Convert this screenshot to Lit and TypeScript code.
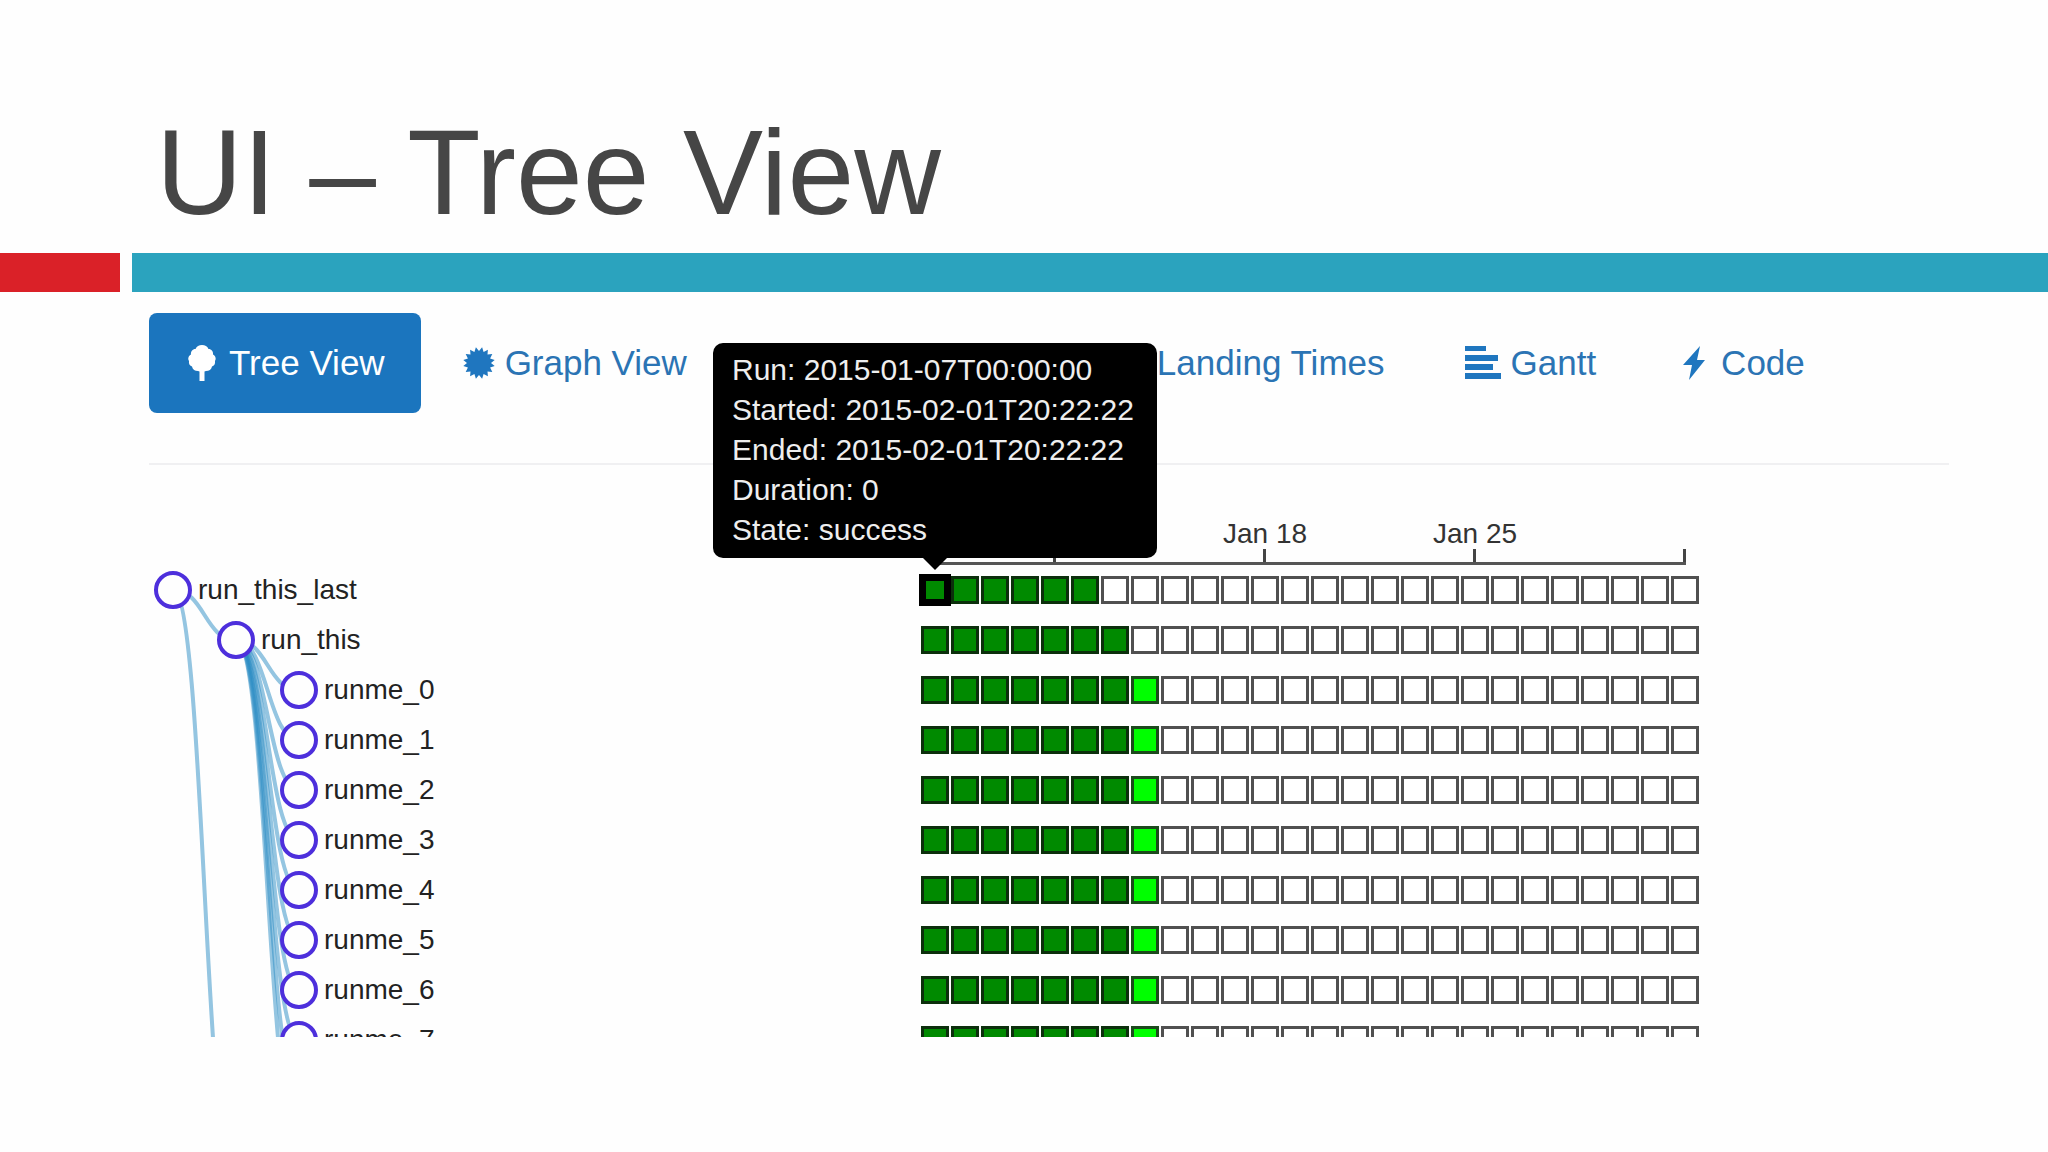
import { LitElement, html, svg, css } from "lit";
import { customElement, property } from "lit/decorators.js";
import { classMap } from "lit/directives/class-map.js";

type RunState = "success" | "running" | "none";

interface Task {
  name: string;
  depth: number;
  row: number;
  success: number;
  running: number;
}

const RUN_COUNT = 26;
const ROW_HEIGHT = 50;
const INDENT = 63;

const TASKS: Task[] = [
  { name: "run_this_last", depth: 0, row: 0, success: 6, running: 0 },
  { name: "run_this", depth: 1, row: 1, success: 7, running: 0 },
  ...Array.from({ length: 8 }, (_, i) => ({
    name: `runme_${i}`,
    depth: 2,
    row: i + 2,
    success: 7,
    running: 1,
  })),
];

/* Edges also reach rows that lie below the visible part of the tree. */
const EDGES = [
  { from: [0, 0], to: [1, 1] },
  { from: [0, 0], to: [1, 12] },
  ...Array.from({ length: 10 }, (_, i) => ({ from: [1, 1], to: [2, i + 2] })),
];

const ICONS = {
  tree: svg`<path d="M15 0c3 0 5.500 1.500 6.500 4 3 0 5 2.500 4.500 5.500 2.500 1.500 3.500 4 2 6.500.5 3-1 5-3 5.500-.5 3-3 4.500-6 4.500l-1.500.5V36h-5V26.500L11 26c-3 0-5.500-1.500-6-4.500-2-.5-3.500-2.500-3-5.500-1.500-2.500-.5-5 2-6.500C3.500 6.500 5.500 4 8.500 4c1-2.500 3.500-4 6.500-4z"/>`,
  burst: svg`<polygon points=${Array.from({ length: 32 }, (_, i) => {
    const r = i % 2 ? 12 : 16;
    const a = (i * Math.PI) / 16 + Math.PI / 16;
    return `${(16 + r * Math.sin(a)).toFixed(1)},${(16 - r * Math.cos(a)).toFixed(1)}`;
  }).join(" ")} />`,
  plane: svg`<path d="M16 0l4 4v9l12 10v4l-12-5v7l4 3v2l-8-2-8 2v-2l4-3v-7L0 27v-4l12-10V4z"/>`,
  bars: svg`<path d="M0 0h21v5H0zM0 9h33v6H0zM0 18h28v6H0zM0 27h36v6H0z"/>`,
  bolt: svg`<path d="M17 0L0 19h9L6 34l16-20h-8z"/>`,
};

const NAV = [
  { label: "Tree View", icon: ICONS.tree, w: 30, h: 36, slot: "active" },
  { label: "Graph View", icon: ICONS.burst, w: 32, h: 32, slot: "" },
  { label: "Landing Times", icon: ICONS.plane, w: 32, h: 34, slot: "far" },
  { label: "Gantt", icon: ICONS.bars, w: 36, h: 34, slot: "" },
  { label: "Code", icon: ICONS.bolt, w: 22, h: 34, slot: "code" },
];

@customElement("dag-nav")
export class DagNav extends LitElement {
  static styles = css`
    :host { display: block; }
    .nav { display: flex; gap: 4px; }
    .pill {
      display: flex;
      align-items: center;
      height: 100px;
      padding: 0 38px;
      gap: 10px;
      border-radius: 8px;
      font-size: 35px;
      color: #2b74b4;
      text-decoration: none;
      white-space: nowrap;
    }
    .icon { display: block; fill: #1f76bf; }
    .active { background: #1b75be; color: #fff; gap: 12px; padding-right: 36px; }
    .active .icon { fill: #fff; }
    .far { margin-left: 352px; gap: 6px; }
    .code { gap: 16px; padding-left: 45px; }
  `;

  render() {
    return html`<nav class="nav">
      ${NAV.map(
        (n) => html`<a
          href="#"
          class=${classMap({ pill: true, active: n.slot === "active", far: n.slot === "far", code: n.slot === "code" })}
          ><svg class="icon" width=${n.w} height=${n.h} viewBox="0 0 ${n.w} ${n.h}" aria-hidden="true">${n.icon}</svg
          ><span>${n.label}</span></a
        >`
      )}
    </nav>`;
  }
}

@customElement("run-tooltip")
export class RunTooltip extends LitElement {
  @property({ attribute: false }) lines: string[] = [];

  static styles = css`
    :host { display: block; }
    .box {
      position: relative;
      padding: 7px 23px 8px 19px;
      border-radius: 10px;
      background: #000;
      color: #eee;
      font-size: 30px;
      line-height: 40px;
      white-space: nowrap;
    }
    .arrow {
      position: absolute;
      top: 100%;
      left: 50%;
      margin-left: -12px;
      border: 12px solid transparent;
      border-top-color: #000;
      border-bottom-width: 0;
    }
  `;

  render() {
    return html`<div class="box" role="tooltip">
      ${this.lines.map((l) => html`<div>${l}</div>`)}
      <span class="arrow"></span>
    </div>`;
  }
}

@customElement("task-tree")
export class TaskTree extends LitElement {
  static styles = css`
    :host { display: block; }
    .axis {
      display: flex;
      flex-direction: column;
      justify-content: flex-end;
      height: 100px;
      padding-left: 785px;
      font-size: 28px;
      line-height: 32px;
      color: #333;
    }
    .dates { display: flex; padding-left: 226px; margin-bottom: -1px; }
    .date { width: 210px; text-align: center; }
    .ticks { display: flex; width: 752px; border-bottom: 3px solid #555; }
    .tick { box-sizing: border-box; height: 13px; width: 210px; border-right: 3px solid #444; }
    .first { width: 122px; }
    .view { position: relative; height: 472px; overflow: hidden; }
    .edges { position: absolute; left: 0; top: 0; overflow: visible; }
    .edge { fill: none; stroke: #2a8cc4; stroke-opacity: 0.5; stroke-width: 4; }
    .row { position: relative; display: flex; align-items: center; height: 50px; }
    .task { display: flex; align-items: center; flex: 0 0 767px; box-sizing: border-box; width: 767px; }
    .node {
      box-sizing: border-box;
      width: 38px;
      height: 38px;
      margin-right: 6px;
      border: 4px solid #4d2fdc;
      border-radius: 50%;
      background: #fefefe;
    }
    .name { font-size: 28px; line-height: 32px; color: #222; }
    .runs { display: flex; gap: 2px; margin-left: 5px; }
    .run { box-sizing: border-box; width: 28px; height: 28px; border: 3px solid #505050; background: #fff; }
    .success { background: #008a00; border-color: #0c2f0c; }
    .running { background: #00ff00; border-color: #1c4a1c; }
    .hovered { z-index: 1; width: 32px; height: 32px; margin: -2px; border: 7px solid #000; }
  `;

  private edge(from: number[], to: number[]) {
    const x0 = 24 + from[0] * INDENT;
    const y0 = 25 + from[1] * ROW_HEIGHT;
    const x1 = 24 + to[0] * INDENT;
    const y1 = 25 + to[1] * ROW_HEIGHT;
    const mid = (x0 + x1) / 2;
    return svg`<path class="edge" d="M${x0},${y0}C${mid},${y0} ${mid},${y1} ${x1},${y1}" />`;
  }

  private stateOf(task: Task, index: number): RunState {
    if (index < task.success) return "success";
    return index < task.success + task.running ? "running" : "none";
  }

  render() {
    return html`
      <div class="axis">
        <div class="dates"><span class="date">Jan 18</span><span class="date">Jan 25</span></div>
        <div class="ticks">
          <span class="tick first"></span><span class="tick"></span><span class="tick"></span><span class="tick"></span>
        </div>
      </div>
      <div class="view">
        <svg class="edges" width="200" height="472" aria-hidden="true">${EDGES.map((e) => this.edge(e.from, e.to))}</svg>
        ${TASKS.map(
          (t) => html`<div class="row">
            <div class="task" style="padding-left:${5 + t.depth * INDENT}px">
              <span class="node"></span><span class="name">${t.name}</span>
            </div>
            <div class="runs">
              ${Array.from({ length: RUN_COUNT }, (_, i) => {
                const state = this.stateOf(t, i);
                return html`<span
                  class=${classMap({
                    run: true,
                    success: state === "success",
                    running: state === "running",
                    hovered: t.row === 0 && i === 0,
                  })}
                ></span>`;
              })}
            </div>
          </div>`
        )}
      </div>
    `;
  }
}

@customElement("app-root")
export class AppRoot extends LitElement {
  static styles = css`
    :host {
      display: block;
      min-height: 100vh;
      background: #fefefe;
      font-family: "Liberation Sans", Arial, Helvetica, sans-serif;
    }
    .title {
      margin: 0;
      padding: 112px 0 21px 156px;
      font-size: 120px;
      line-height: 120px;
      font-weight: 400;
      color: #464646;
    }
    .band { display: flex; gap: 12px; height: 39px; }
    .red { width: 120px; background: #da2128; }
    .teal { flex: 1; background: #2ba3be; }
    .panel { position: relative; padding: 21px 99px 0 149px; }
    .rule { height: 2px; margin: 50px 0 0; border: 0; background: #f0f0f2; }
    .tip { position: absolute; z-index: 2; left: 713px; top: 51px; }
  `;

  private tip = [
    "Run: 2015-01-07T00:00:00",
    "Started: 2015-02-01T20:22:22",
    "Ended: 2015-02-01T20:22:22",
    "Duration: 0",
    "State: success",
  ];

  render() {
    return html`
      <h1 class="title">UI – Tree View</h1>
      <div class="band"><div class="red"></div><div class="teal"></div></div>
      <main class="panel">
        <dag-nav></dag-nav>
        <hr class="rule" />
        <task-tree></task-tree>
        <run-tooltip class="tip" .lines=${this.tip}></run-tooltip>
      </main>
    `;
  }
}
